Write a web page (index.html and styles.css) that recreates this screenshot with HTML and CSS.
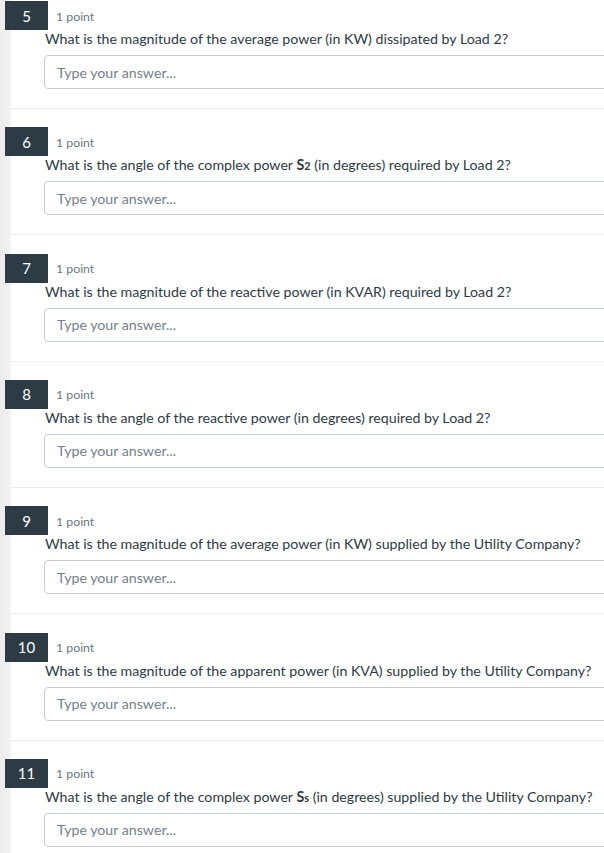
FILE: index.html
```html
<!DOCTYPE html>
<html lang="en">
<head>
<meta charset="utf-8">
<title>Quiz</title>
<link rel="stylesheet" href="styles.css">
</head>
<body>
<div class="quiz">
  <div class="question">
    <div class="q-head"><span class="q-num">5</span><span class="q-points">1 point</span></div>
    <div class="q-body">
      <p class="q-text">What is the magnitude of the average power (in KW) dissipated by Load 2?</p>
      <input class="q-input" type="text" placeholder="Type your answer...">
    </div>
  </div>
  <div class="question">
    <div class="q-head"><span class="q-num">6</span><span class="q-points">1 point</span></div>
    <div class="q-body">
      <p class="q-text">What is the angle of the complex power <b class="sym">S<span class="sub">2</span></b> (in degrees) required by Load 2?</p>
      <input class="q-input" type="text" placeholder="Type your answer...">
    </div>
  </div>
  <div class="question">
    <div class="q-head"><span class="q-num">7</span><span class="q-points">1 point</span></div>
    <div class="q-body">
      <p class="q-text">What is the magnitude of the reactive power (in KVAR) required by Load 2?</p>
      <input class="q-input" type="text" placeholder="Type your answer...">
    </div>
  </div>
  <div class="question">
    <div class="q-head"><span class="q-num">8</span><span class="q-points">1 point</span></div>
    <div class="q-body">
      <p class="q-text">What is the angle of the reactive power (in degrees) required by Load 2?</p>
      <input class="q-input" type="text" placeholder="Type your answer...">
    </div>
  </div>
  <div class="question">
    <div class="q-head"><span class="q-num">9</span><span class="q-points">1 point</span></div>
    <div class="q-body">
      <p class="q-text">What is the magnitude of the average power (in KW) supplied by the Utility Company?</p>
      <input class="q-input" type="text" placeholder="Type your answer...">
    </div>
  </div>
  <div class="question">
    <div class="q-head"><span class="q-num">10</span><span class="q-points">1 point</span></div>
    <div class="q-body">
      <p class="q-text">What is the magnitude of the apparent power (in KVA) supplied by the Utility Company?</p>
      <input class="q-input" type="text" placeholder="Type your answer...">
    </div>
  </div>
  <div class="question">
    <div class="q-head"><span class="q-num">11</span><span class="q-points">1 point</span></div>
    <div class="q-body">
      <p class="q-text">What is the angle of the complex power <b class="sym">S<span class="sub">s</span></b> (in degrees) supplied by the Utility Company?</p>
      <input class="q-input" type="text" placeholder="Type your answer...">
    </div>
  </div>
</div>
</body>
</html>
```
FILE: styles.css
```css
html, body {
  margin: 0;
  padding: 0;
  height: 100%;
  overflow: hidden;
}
body {
  background: #fff linear-gradient(to right, #ebebeb, #f3f3f3) no-repeat 0 0 / 11px 100%;
  font-family: Lato, "Liberation Sans", sans-serif;
  color: #2d3b45;
}
.quiz {
  padding: 1px 0 0 5px;
  overflow: hidden;
}
.question {
  padding-bottom: 19px;
  border-bottom: 1px solid #eeeeee;
}
.question + .question {
  margin-top: 18.33px;
}
.q-head {
  display: flex;
  align-items: center;
  height: 29px;
}
.q-num {
  width: 43px;
  height: 29px;
  background: #2d3b45;
  color: #fff;
  font-size: 15px;
  display: flex;
  align-items: center;
  justify-content: center;
}
.q-points {
  margin-left: 8px;
  font-size: 12.3px;
  color: #6b7780;
  padding-top: 1px;
}
.q-body {
  padding-left: 39px;
}
.q-text {
  margin: 0;
  font-size: 14.2px;
  line-height: 18px;
  padding-left: 1px;
  white-space: nowrap;
}
.sym {
  font-weight: 700;
}
.sub {
  font-size: 11px;
  line-height: 0;
}
.q-input {
  display: block;
  box-sizing: border-box;
  margin-top: 7px;
  width: 600px;
  height: 34px;
  border: 1px solid #c7cdd1;
  border-radius: 4px;
  padding: 0 12px;
  font-family: Lato, "Liberation Sans", sans-serif;
  font-size: 14.2px;
  color: #2d3b45;
  background: #fff;
  outline: none;
}
.q-input::placeholder {
  color: #73818c;
  opacity: 1;
}
```
